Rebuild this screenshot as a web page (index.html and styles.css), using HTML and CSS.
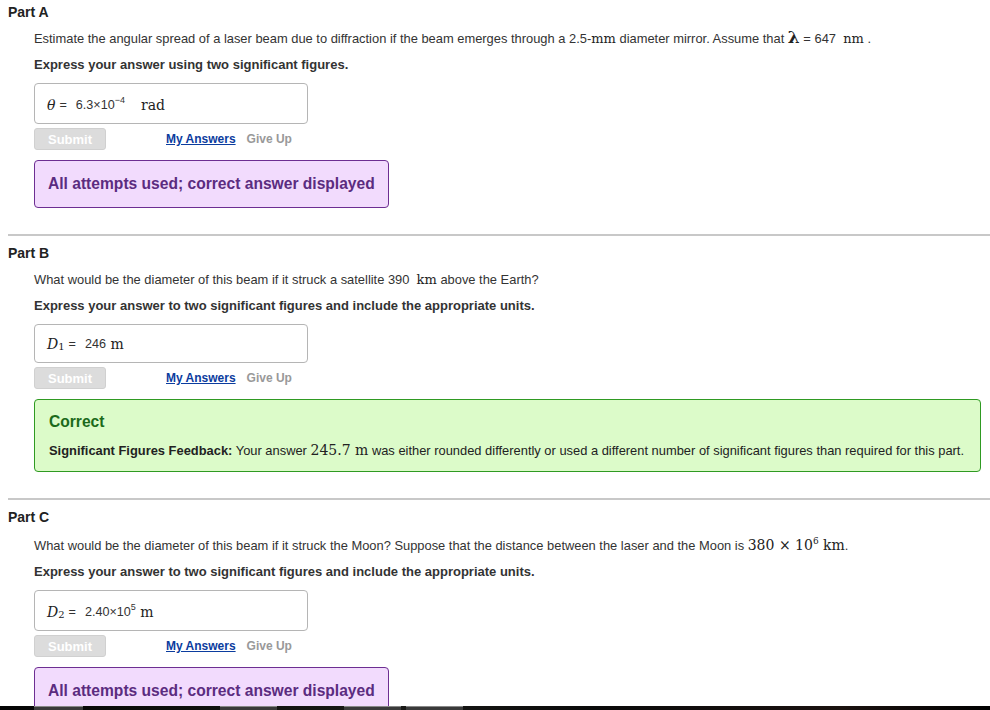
FILE: index.html
```html
<!DOCTYPE html>
<html>
<head>
<meta charset="utf-8">
<link rel="stylesheet" href="styles.css">
</head>
<body>
<div class="page">
  <section class="part">
    <div class="part-title">Part A</div>
    <div class="part-body">
      <p class="question">Estimate the angular spread of a laser beam due to diffraction if the beam emerges through a 2.5-<span class="math">mm</span> diameter mirror. Assume that <span class="math lam">λ</span> = 647 &nbsp;<span class="math">nm</span> .</p>
      <p class="instr">Express your answer using two significant figures.</p>
      <div class="answer tall"><span class="math it">θ</span><span class="eq">=</span><span class="val">6.3×10<sup>−4</sup></span><span class="math unit-gap">rad</span></div>
      <div class="actions">
        <span class="submit">Submit</span>
        <a class="my-answers" href="#">My Answers</a>
        <span class="give-up">Give Up</span>
      </div>
      <div class="feedback purple">All attempts used; correct answer displayed</div>
    </div>
  </section>
  <hr class="sep">
  <section class="part">
    <div class="part-title">Part B</div>
    <div class="part-body">
      <p class="question">What would be the diameter of this beam if it struck a satellite 390 &nbsp;<span class="math">km</span> above the Earth?</p>
      <p class="instr">Express your answer to two significant figures and include the appropriate units.</p>
      <div class="answer"><span class="math it">D</span><span class="math sub">1</span><span class="eq">=</span><span class="val">246</span><span class="math">&nbsp;m</span></div>
      <div class="actions">
        <span class="submit">Submit</span>
        <a class="my-answers" href="#">My Answers</a>
        <span class="give-up">Give Up</span>
      </div>
      <div class="feedback green">
        <div class="correct">Correct</div>
        <div class="sigfig"><b>Significant Figures Feedback:</b> Your answer <span class="math big">245.7 m</span> was either rounded differently or used a different number of significant figures than required for this part.</div>
      </div>
    </div>
  </section>
  <hr class="sep">
  <section class="part">
    <div class="part-title">Part C</div>
    <div class="part-body">
      <p class="question q-tall">What would be the diameter of this beam if it struck the Moon? Suppose that the distance between the laser and the Moon is <span class="math big">380 × 10<sup class="msup">6</sup> km</span>.</p>
      <p class="instr">Express your answer to two significant figures and include the appropriate units.</p>
      <div class="answer tall"><span class="math it">D</span><span class="math sub">2</span><span class="eq">=</span><span class="val">2.40×10<sup>5</sup></span><span class="math">&nbsp;m</span></div>
      <div class="actions">
        <span class="submit">Submit</span>
        <a class="my-answers" href="#">My Answers</a>
        <span class="give-up">Give Up</span>
      </div>
      <div class="feedback purple">All attempts used; correct answer displayed</div>
    </div>
  </section>
</div>
<div class="taskbar">
  <span class="tb-item w49 x34"></span>
  <span class="tb-item w57 x220"></span>
  <span class="tb-item w57 x344"></span>
  <span class="tb-item w57 x406"></span>
</div>
</body>
</html>
```
FILE: styles.css
```css
html, body {
  margin: 0;
  padding: 0;
  background: #fff;
}
body {
  font-family: "Liberation Sans", Arial, sans-serif;
  font-size: 13px;
  color: #333;
}
.page {
  padding-top: 4px;
}
.part-title {
  font-weight: bold;
  font-size: 14px;
  line-height: 16px;
  color: #222;
  padding-left: 8px;
}
.part-body {
  padding-left: 34px;
}
.question {
  margin: 11px 0 0;
  height: 16px;
  line-height: 16px;
  font-size: 12.9px;
  color: #333;
  white-space: nowrap;
}
.question.q-tall {
  margin-top: 13px;
}
.instr {
  margin: 10px 0 0;
  height: 16px;
  line-height: 16px;
  font-weight: bold;
  font-size: 13px;
  color: #333;
}
.math {
  font-family: "DejaVu Serif", "Liberation Serif", serif;
  font-size: 13px;
  line-height: 0;
  color: #222;
}
.math.big {
  font-size: 14px;
}
.lam {
  font-size: 17px;
  font-weight: bold;
}
.it {
  font-style: italic;
}
.answer {
  margin-top: 10px;
  width: 274px;
  height: 39px;
  box-sizing: border-box;
  border: 1px solid #b5b5b5;
  border-radius: 4px;
  padding: 0 12px;
  display: flex;
  align-items: center;
  background: #fff;
  font-size: 12.6px;
}
.answer.tall {
  height: 41px;
  padding-top: 2px;
}
.answer .math {
  font-size: 14px;
  line-height: 1;
}
.answer .eq {
  margin: 0 9px 0 4px;
  font-size: 12.6px;
  color: #333;
}
.answer .val {
  color: #333;
}
.answer sup {
  font-size: 9px;
  vertical-align: 6px;
  line-height: 0;
}
.msup {
  font-size: 9px;
  vertical-align: 6px;
  line-height: 0;
}
.answer .sub {
  font-size: 10px;
  position: relative;
  top: 3px;
}
.unit-gap {
  margin-left: 16px;
}
.actions {
  margin-top: 4px;
  display: flex;
  align-items: center;
  height: 22px;
  font-weight: bold;
  font-size: 12px;
}
.submit {
  width: 72px;
  height: 22px;
  box-sizing: border-box;
  background: #dcdcdc;
  border: 1px solid #d0d0d0;
  border-radius: 3px;
  color: #fff;
  font-size: 13px;
  display: flex;
  align-items: center;
  justify-content: center;
}
.my-answers {
  margin-left: 60px;
  color: #0b3c9e;
  text-decoration: underline;
}
.give-up {
  margin-left: 11px;
  color: #999;
}
.feedback {
  margin-top: 10px;
  box-sizing: border-box;
  border-radius: 4px;
}
.purple {
  width: 355px;
  height: 48px;
  background: #f2dbfd;
  border: 1px solid #6d2e92;
  color: #5b2c80;
  font-weight: bold;
  font-size: 15.6px;
  white-space: nowrap;
  display: flex;
  align-items: center;
  padding-left: 13px;
}
.green {
  width: 947px;
  height: 73px;
  background: #dcfbc9;
  border: 1px solid #2f9a22;
  padding: 12px 0 0 14px;
}
.correct {
  color: #1b6a1b;
  font-weight: bold;
  font-size: 15.6px;
  line-height: 20px;
}
.sigfig {
  margin-top: 10px;
  line-height: 18px;
  height: 18px;
  color: #222;
  font-size: 12.9px;
  white-space: nowrap;
}
.sep {
  margin: 26px 0 9px 8px;
  border: 0;
  height: 2px;
  background: #c8c8c8;
}
.taskbar {
  position: fixed;
  left: 0;
  right: 0;
  bottom: 0;
  height: 4px;
  background: linear-gradient(90deg, #050505 0%, #1a1a17 40%, #0a0a0a 60%, #1b1210 85%, #000 100%);
}
.tb-item {
  position: absolute;
  top: 0;
  height: 4px;
  background: #3a3a3a;
  border-top: 1px solid #888;
  box-sizing: border-box;
}
.w49 { width: 49px; }
.w57 { width: 57px; }
.x34 { left: 34px; }
.x220 { left: 220px; }
.x344 { left: 344px; }
.x406 { left: 406px; }
```
